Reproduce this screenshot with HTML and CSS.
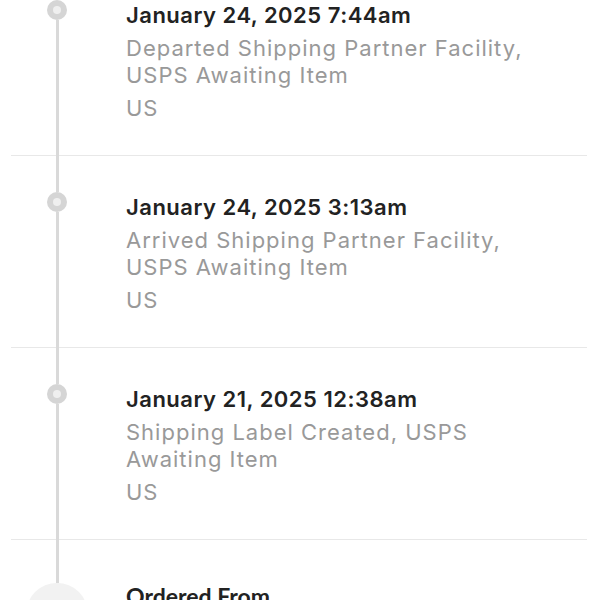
FILE: index.html
```html
<!doctype html>
<html lang='en-US'>
  <head>
    <title>Tracking</title>
    <meta charset='UTF-8'>
    <meta name='viewport' content='width=device-width, initial-scale=1'>
    <link rel="stylesheet" href="styles.css">
  </head>
  <body>
<ol class=timeline>
  <li class=event>
    <div class=rail>
      <span class=seg-top></span>
      <span class=dot></span>
      <span class=seg></span>
    </div>
    <div class=info>
      <h3 class=date>January 24, 2025 7:44am</h3>
      <p class=desc>Departed Shipping Partner Facility, USPS Awaiting Item</p>
      <p class=place>US</p>
    </div>
  </li>
  <li class=event>
    <div class=rail>
      <span class=seg-top></span>
      <span class=dot></span>
      <span class=seg></span>
    </div>
    <div class=info>
      <h3 class=date>January 24, 2025 3:13am</h3>
      <p class=desc>Arrived Shipping Partner Facility, USPS Awaiting Item</p>
      <p class=place>US</p>
    </div>
  </li>
  <li class=event>
    <div class=rail>
      <span class=seg-top></span>
      <span class=dot></span>
      <span class=seg></span>
    </div>
    <div class=info>
      <h3 class=date>January 21, 2025 12:38am</h3>
      <p class=desc>Shipping Label Created, USPS Awaiting Item</p>
      <p class=place>US</p>
    </div>
  </li>
  <li class="event origin">
    <div class=rail>
      <span class=seg-top></span>
      <span class=shop></span>
    </div>
    <div class=info>
      <h3 class=from>Ordered From</h3>
    </div>
  </li>
</ol>
  </body>
</html>
```

FILE: styles.css
```css
html, body {
  font-family: Inter, "Noto Sans", sans-serif;
  background: white;
}
body {
  margin: 0;
  overflow: hidden;
}
.timeline {
  list-style: none;
  margin: -36px 0 0;
  padding: 0;
}
.event {
  margin: 0 13px 0 11px;
  display: grid;
  grid-template-columns: 92px 1fr;
  column-gap: 23px;
  border-bottom: 1px solid #e8e8e8;
}
.rail {
  display: flex;
  flex-direction: column;
  align-items: center;
}
.seg-top {
  width: 3px;
  height: 36px;
  background: #d9d9d9;
}
.seg {
  width: 3px;
  flex: 1;
  background: #d9d9d9;
  margin-bottom: -1px;
}
.dot {
  width: 20px;
  height: 20px;
  border-radius: 50%;
  background: #d5d5d5;
  display: flex;
  align-items: center;
  justify-content: center;
}
.dot::after {
  content: '';
  width: 8px;
  height: 8px;
  border-radius: 50%;
  background: #efefef;
}
.info {
  padding: 37px 42px 33px 0;
}
.date {
  margin: 0;
  font-size: 22px;
  line-height: 28px;
  font-weight: 600;
  letter-spacing: 0.5px;
  color: #222;
}
.desc, .place {
  margin: 6px 0 0;
  font-size: 22px;
  line-height: 27px;
  letter-spacing: 1px;
  color: #999;
  font-weight: 400;
}
.origin {
  border-bottom: none;
}
.origin .seg-top {
  height: 43px;
}
.shop {
  width: 62px;
  height: 62px;
  border-radius: 50%;
  background: #f2f2f2;
}
.origin .info {
  padding-top: 42px;
}
.from {
  margin: 0;
  font-family: Lato, sans-serif;
  font-size: 23px;
  line-height: 28px;
  font-weight: 700;
  color: #222;
}
```
